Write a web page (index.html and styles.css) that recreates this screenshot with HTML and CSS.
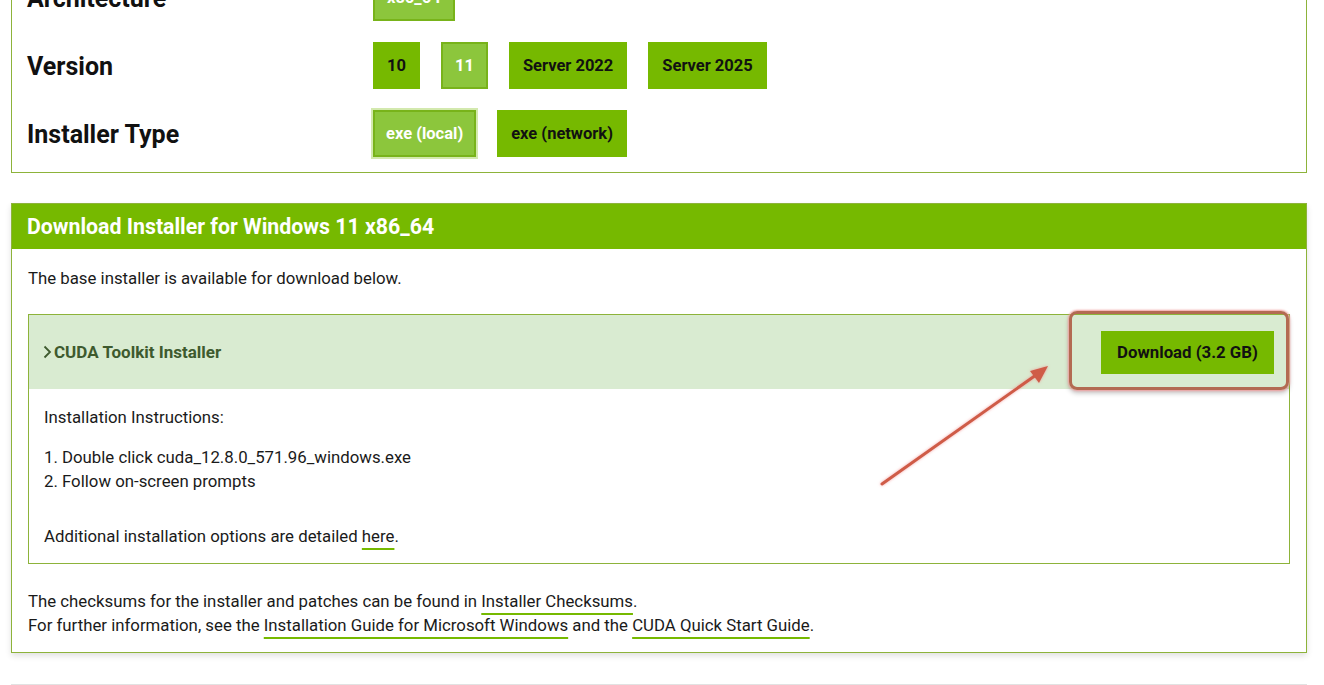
FILE: index.html
```html
<!DOCTYPE html>
<html>
<head>
<meta charset="utf-8">
<link rel="stylesheet" href="styles.css">
</head>
<body>
<div class="page">
  <section class="panel config">
    <div class="row">
      <div class="label">Architecture</div>
      <div class="opts"><span class="btn sel">x86_64</span></div>
    </div>
    <div class="row">
      <div class="label">Version</div>
      <div class="opts">
        <span class="btn">10</span>
        <span class="btn sel">11</span>
        <span class="btn">Server 2022</span>
        <span class="btn">Server 2025</span>
      </div>
    </div>
    <div class="row">
      <div class="label">Installer Type</div>
      <div class="opts">
        <span class="btn sel ring">exe (local)</span>
        <span class="btn">exe (network)</span>
      </div>
    </div>
  </section>

  <section class="panel download">
    <div class="dl-head">Download Installer for Windows 11 x86_64</div>
    <div class="dl-body">
      <p class="intro">The base installer is available for download below.</p>
      <div class="inst">
        <div class="inst-head">
          <div class="toggle"><svg class="chev" width="9" height="14" viewBox="0 0 9 14"><path d="M1.5 1.5 L7 7 L1.5 12.5" fill="none" stroke="#3e5a2e" stroke-width="1.8"/></svg>CUDA Toolkit Installer</div>
          <span class="dl-btn">Download (3.2 GB)</span>
        </div>
        <div class="inst-body">
          <p>Installation Instructions:</p>
          <ol>
            <li>Double click cuda_12.8.0_571.96_windows.exe</li>
            <li>Follow on-screen prompts</li>
          </ol>
          <p class="extra">Additional installation options are detailed <a>here</a>.</p>
        </div>
      </div>
      <p class="foot">The checksums for the installer and patches can be found in <a>Installer Checksums</a>.<br>For further information, see the <a>Installation Guide for Microsoft Windows</a> and the <a>CUDA Quick Start Guide</a>.</p>
    </div>
  </section>
  <div class="rule"></div>
</div>
<div class="annot-box"></div>
<svg class="annot-arrow" width="1324" height="685" viewBox="0 0 1324 685">
  <defs>
    <filter id="sh" x="-20%" y="-20%" width="140%" height="140%">
      <feDropShadow dx="0" dy="0" stdDeviation="1.5" flood-color="#f08080" flood-opacity="0.7"/>
    </filter>
  </defs>
  <g filter="url(#sh)">
    <line x1="882" y1="484" x2="1036" y2="375" stroke="#cf5b47" stroke-width="3" stroke-linecap="round"/>
    <polygon points="1048,366 1030,371 1039,383" fill="#cf5b47"/>
  </g>
</svg>
</body>
</html>
```
FILE: styles.css
```css
html, body {
  margin: 0;
  padding: 0;
  background: #fff;
  overflow: hidden;
}
body {
  font-family: Roboto, "Liberation Sans", sans-serif;
  color: #1a1a1a;
  position: relative;
  height: 685px;
}
.page {
  margin: 0 17px 0 11px;
}
.panel {
  border: 1px solid #8db33a;
  background: #fff;
}
.config {
  margin-top: -42px;
  padding: 15px 15px 15px 15px;
  display: flex;
  flex-direction: column;
  gap: 21px;
}
.row {
  display: flex;
  align-items: center;
  height: 47px;
}
.label {
  width: 346px;
  font-size: 25px;
  font-weight: 700;
  color: #111;
  padding-top: 2px;
}
.opts {
  display: flex;
  gap: 21px;
  height: 47px;
}
.btn {
  display: flex;
  align-items: center;
  justify-content: center;
  height: 47px;
  box-sizing: border-box;
  padding: 0 14px;
  background: #76b900;
  color: #111;
  font-size: 16.5px;
  font-weight: 700;
}
.btn.sel {
  background: #8cc63c;
  border: 2px solid #78b31a;
  color: #fff;
  padding: 0 12px;
}
.btn.ring {
  box-shadow: 0 0 0 2px #d3e9ae;
  padding: 0 11px;
}
.download {
  margin-top: 30px;
  box-shadow: 0 3px 6px rgba(0,0,0,0.12);
}
.dl-head {
  background: #76b900;
  color: #fff;
  font-size: 21.3px;
  font-weight: 700;
  height: 45px;
  display: flex;
  align-items: center;
  padding-left: 15px;
}
.dl-body {
  padding: 17px 16px 15px 16px;
  font-size: 16.8px;
  line-height: 24px;
  color: #1a1a1a;
}
.dl-body p {
  margin: 0;
}
.intro {
  margin-bottom: 24px !important;
}
.inst {
  border: 1px solid #8db33a;
}
.inst-head {
  background: #d9ebd1;
  height: 74px;
  display: flex;
  align-items: center;
  justify-content: space-between;
  padding: 0 15px 0 14px;
}
.toggle {
  display: flex;
  align-items: center;
  gap: 2px;
  font-size: 17px;
  font-weight: 700;
  color: #3e5a2e;
}
.chev {
  display: block;
}
.dl-btn {
  display: flex;
  align-items: center;
  justify-content: center;
  width: 173px;
  height: 43px;
  background: #76b900;
  color: #111;
  font-size: 16.8px;
  font-weight: 700;
}
.inst-body {
  padding: 16px 15px 15px 15px;
}
.inst-body ol {
  margin: 16px 0 31px 0;
  padding-left: 18px;
}
.foot {
  margin-top: 25px !important;
}
a {
  color: inherit;
  text-decoration: underline;
  text-decoration-color: #76b900;
  text-decoration-thickness: 2px;
  text-underline-offset: 6px;
}
.rule {
  margin-top: 31px;
  border-top: 1px solid #e2e2e2;
}
.annot-box {
  position: absolute;
  left: 1069px;
  top: 311px;
  width: 214px;
  height: 73px;
  border: 3px solid #b36a52;
  border-radius: 8px;
  box-shadow: 0 0 2px 1px #f3a0a0, 0 3px 5px rgba(0,0,0,0.25);
}
.annot-arrow {
  position: absolute;
  left: 0;
  top: 0;
  pointer-events: none;
}
```
